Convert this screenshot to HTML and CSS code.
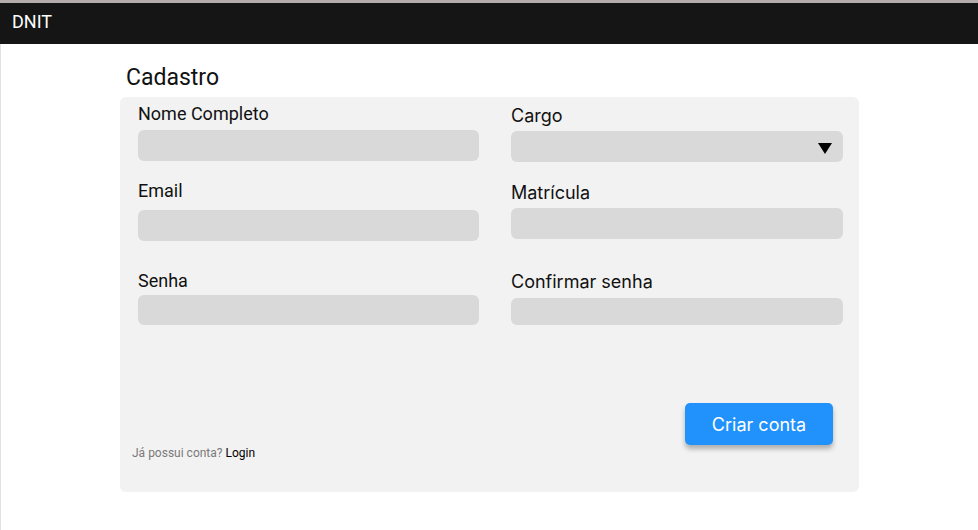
FILE: index.html
```html
<!DOCTYPE html>
<html lang="pt-BR">
<head>
<meta charset="utf-8">
<title>DNIT - Cadastro</title>
<link rel="stylesheet" href="styles.css">
</head>
<body>
<header class="topbar">DNIT</header>
<main class="page">
  <h1 class="title">Cadastro</h1>
  <form class="panel">
    <div class="cols">
      <div class="col col-left">
        <label class="lbl l1">Nome Completo</label>
        <div class="inp h31 m1"></div>
        <label class="lbl l2">Email</label>
        <div class="inp h31 m2"></div>
        <label class="lbl l3">Senha</label>
        <div class="inp h30 m3"></div>
      </div>
      <div class="col col-right">
        <label class="lbl r1">Cargo</label>
        <div class="inp h31 select rm1"><span class="arrow"></span></div>
        <label class="lbl r2">Matrícula</label>
        <div class="inp h31 rm2"></div>
        <label class="lbl r3">Confirmar senha</label>
        <div class="inp h27 rm3"></div>
      </div>
    </div>
    <div class="footer">
      <p class="login">Já possui conta? <a class="login-link">Login</a></p>
      <button type="button" class="btn">Criar conta</button>
    </div>
  </form>
</main>
</body>
</html>
```
FILE: styles.css
```css
* { box-sizing: border-box; }
html, body { margin: 0; padding: 0; background: #fff; }
body { font-family: Roboto, "Liberation Sans", sans-serif; color: #111; }

.topbar {
  border-top: 3px solid #b5adad;
  background: #151515;
  color: #fff;
  height: 44px;
  line-height: 38px;
  font-size: 18px;
  padding-left: 12px;
}

.page {
  border-left: 1px solid #e2e2e2;
  padding-left: 119px;
  height: 486px;
  padding-top: 20px;
}

.title {
  margin: 0 0 6px 6px;
  font-size: 23px;
  font-weight: 400;
  line-height: 27px;
  color: #111;
}

.panel {
  width: 739px;
  height: 395px;
  background: #f2f2f2;
  border-radius: 6px;
  display: flex;
  flex-direction: column;
  padding-bottom: 32px;
}

.cols {
  display: flex;
  gap: 32px;
  padding: 6px 16px 0 18px;
}
.col { display: flex; flex-direction: column; }
.col-left { width: 341px; }
.col-right { width: 332px; }

.lbl {
  display: block;
  font-size: 18px;
  line-height: 21px;
  height: 21px;
  white-space: nowrap;
  color: #111;
}
.col-right .lbl { font-family: Inter, "Open Sans", sans-serif; }

.inp {
  background: #d9d9d9;
  border-radius: 6px;
}
.h31 { height: 31px; }
.h30 { height: 30px; }
.h27 { height: 27px; }

/* left column spacing */
.m1 { margin-top: 6px; }
.l2 { margin-top: 19px; }
.m2 { margin-top: 9px; }
.l3 { margin-top: 29px; }
.m3 { margin-top: 4px; }

/* right column spacing */
.r1 { margin-top: 2px; }
.rm1 { margin-top: 5px; }
.r2 { margin-top: 20px; }
.rm2 { margin-top: 5px; }
.r3 { margin-top: 32px; }
.rm3 { margin-top: 6px; }

.select {
  display: flex;
  align-items: center;
  justify-content: flex-end;
  padding-right: 11px;
}
.arrow {
  width: 0;
  height: 0;
  border-left: 7px solid transparent;
  border-right: 7px solid transparent;
  border-top: 11px solid #000;
  margin-top: 3px;
}

.footer {
  margin-top: auto;
  display: flex;
  justify-content: space-between;
  align-items: flex-end;
  padding: 0 26px 0 12px;
}
.login {
  margin: 0;
  font-size: 12px;
  line-height: 14px;
  color: #7a7a7a;
}
.login-link { color: #000; font-weight: 400; }

.btn {
  width: 148px;
  height: 42px;
  margin-bottom: 15px;
  border: none;
  border-radius: 5px;
  background: #2192fc;
  color: #fff;
  font-family: Inter, "Open Sans", sans-serif;
  font-size: 18px;
  box-shadow: 0 4px 5px rgba(0,0,0,0.28);
}
```
